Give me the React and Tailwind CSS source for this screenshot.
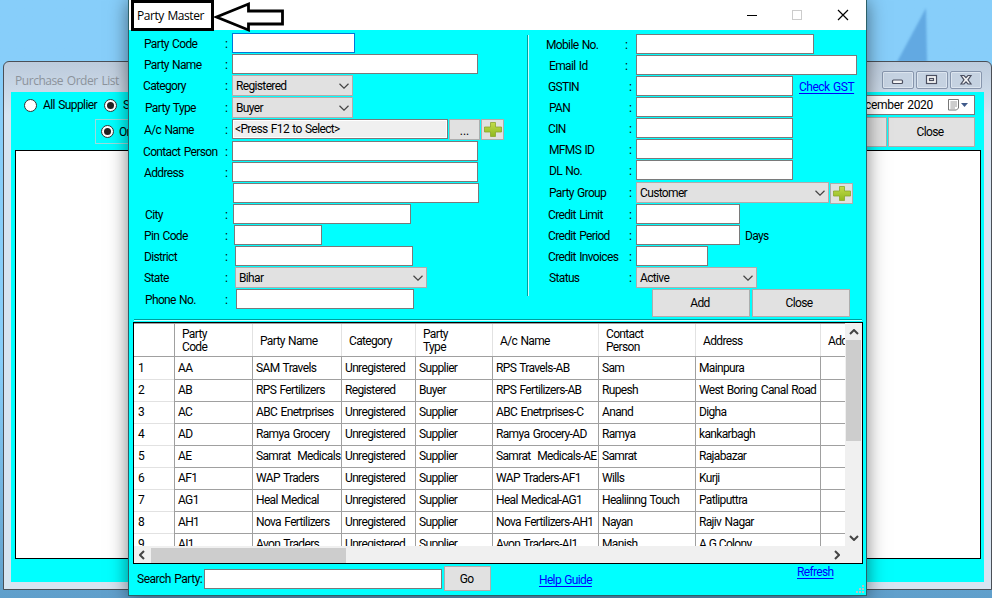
import clsx from 'clsx';

const leftFields = [
  { label: 'Party Code', row: 'h-[21px]', pad: 'pl-[15px]', field: 'ml-0 w-[123px] border-[#0078d7]' },
  { label: 'Party Name', row: 'h-[21px]', pad: 'pl-[15px]', field: 'ml-0 w-[246px]' },
  { label: 'Category', row: 'h-[22px]', pad: 'pl-[14px]', field: 'ml-0 w-[121px]', value: 'Registered', type: 'select' },
  { label: 'Party Type', row: 'h-[22px]', pad: 'pl-[16px]', field: 'ml-0 w-[121px]', value: 'Buyer', type: 'select' },
  { label: 'A/c Name', row: 'h-[22px]', pad: 'pl-[15px]', field: 'ml-0 w-[216px]', value: '<Press F12 to Select>', type: 'lookup' },
  { label: 'Contact Person', row: 'h-[21px]', pad: 'pl-[14px]', field: 'ml-0 w-[246px]' },
  { label: 'Address', row: 'h-[21px]', pad: 'pl-[15px]', field: 'ml-0 w-[246px]' },
  { label: '', row: 'h-[21px]', pad: 'pl-[15px]', field: 'ml-px w-[246px]' },
  { label: 'City', row: 'h-[21px]', pad: 'pl-[16px]', field: 'ml-px w-[178px]' },
  { label: 'Pin Code', row: 'h-[21px]', pad: 'pl-[15px]', field: 'ml-[2px] w-[88px]' },
  { label: 'District', row: 'h-[21px]', pad: 'pl-[15px]', field: 'ml-[3px] w-[178px]' },
  { label: 'State', row: 'h-[22px]', pad: 'pl-[15px]', field: 'ml-[3px] w-[192px]', value: 'Bihar', type: 'select' },
  { label: 'Phone No.', row: 'h-[21px]', pad: 'pl-[16px]', field: 'ml-[4px] w-[178px]' },
];

const rightFields = [
  { label: 'Mobile No.', row: 'h-[21px]', pad: 'pl-[17px]', colon: 'w-[11px]', field: 'w-[178px]' },
  { label: 'Email Id', row: 'h-[21px]', pad: 'pl-[20px]', colon: 'w-[11px]', field: 'w-[221px]' },
  { label: 'GSTIN', row: 'h-[21px]', pad: 'pl-[19px]', field: 'w-[157px]', type: 'gst' },
  { label: 'PAN', row: 'h-[21px]', pad: 'pl-[20px]', field: 'w-[157px]' },
  { label: 'CIN', row: 'h-[21px]', pad: 'pl-[19px]', field: 'w-[157px]' },
  { label: 'MFMS ID', row: 'h-[21px]', pad: 'pl-[20px]', field: 'w-[157px]' },
  { label: 'DL No.', row: 'h-[22px]', pad: 'pl-[20px]', field: 'w-[157px]' },
  { label: 'Party Group', row: 'h-[22px]', pad: 'pl-[20px]', field: 'w-[193px]', value: 'Customer', type: 'group' },
  { label: 'Credit Limit', row: 'h-[21px]', pad: 'pl-[19px]', field: 'w-[104px]' },
  { label: 'Credit Period', row: 'h-[21px]', pad: 'pl-[19px]', field: 'w-[104px]', after: 'Days' },
  { label: 'Credit Invoices', row: 'h-[21px]', pad: 'pl-[19px]', field: 'w-[72px]' },
  { label: 'Status', row: 'h-[22px]', pad: 'pl-[20px]', field: 'w-[121px]', value: 'Active', type: 'select' },
];

const columns = ['', 'Party\nCode', 'Party Name', 'Category', 'Party\nType', 'A/c Name', 'Contact\nPerson', 'Address', 'Add'];

const rows = [
  ['1', 'AA', 'SAM Travels', 'Unregistered', 'Supplier', 'RPS Travels-AB', 'Sam', 'Mainpura', ''],
  ['2', 'AB', 'RPS Fertilizers', 'Registered', 'Buyer', 'RPS Fertilizers-AB', 'Rupesh', 'West Boring Canal Road', ''],
  ['3', 'AC', 'ABC Enetrprises', 'Unregistered', 'Supplier', 'ABC Enetrprises-C', 'Anand', 'Digha', ''],
  ['4', 'AD', 'Ramya Grocery', 'Unregistered', 'Supplier', 'Ramya Grocery-AD', 'Ramya', 'kankarbagh', ''],
  ['5', 'AE', 'Samrat  Medicals', 'Unregistered', 'Supplier', 'Samrat  Medicals-AE', 'Samrat', 'Rajabazar', ''],
  ['6', 'AF1', 'WAP Traders', 'Unregistered', 'Supplier', 'WAP Traders-AF1', 'Wills', 'Kurji', ''],
  ['7', 'AG1', 'Heal Medical', 'Unregistered', 'Supplier', 'Heal Medical-AG1', 'Healiinng Touch', 'Patliputtra', ''],
  ['8', 'AH1', 'Nova Fertilizers', 'Unregistered', 'Supplier', 'Nova Fertilizers-AH1', 'Nayan', 'Rajiv Nagar', ''],
  ['9', 'AI1', 'Avon Traders', 'Unregistered', 'Supplier', 'Avon Traders-AI1', 'Manish', 'A.G.Colony', ''],
];

const gridCols = 'grid grid-cols-[41px_78px_89px_74px_77px_106px_97px_125px_60px]';

function Chevron({ className, d = 'M0.5 0.8 L5 5.2 L9.5 0.8', width = 1.2 }) {
  return (
    <svg viewBox="0 0 10 6" className={clsx('w-[10px] h-[6px] shrink-0', className)} fill="none" stroke="#444" strokeWidth={width}>
      <path d={d} />
    </svg>
  );
}

function PlusButton({ className }) {
  return (
    <button className={clsx('w-[23px] h-[21px] bg-[#e1e1e1] border border-[#adadad] flex items-center justify-center shrink-0', className)}>
      <svg width="18" height="17" viewBox="0 0 18 17">
        <defs>
          <linearGradient id="plus" x1="0" y1="0" x2="0" y2="1">
            <stop offset="0" stopColor="#c3dc4a" />
            <stop offset="1" stopColor="#8fb81f" />
          </linearGradient>
        </defs>
        <path d="M6.500 1.500h5v4.500h6v5h-6v4.500h-5V11h-6V6h6z" fill="url(#plus)" stroke="#8aa62c" strokeWidth="0.8" />
      </svg>
    </button>
  );
}

function Field({ type, value, className }) {
  if (type === 'select' || type === 'group') {
    return (
      <div className={clsx('h-[21px] bg-[#e1e1e1] border border-[#adadad] pl-[3px] pr-[3px] flex items-center justify-between shrink-0', className)}>
        <span className="pt-px">{value}</span>
        <Chevron />
      </div>
    );
  }
  return (
    <div className={clsx('h-[20px] border shrink-0 pl-[2px] leading-[18px]', type === 'lookup' ? 'bg-[#f0f0f0] shadow-[inset_0_0_0_1px_#fff]' : 'bg-white', !className.includes('border-[') && 'border-[#7a7a7a]', className)}>
      {value}
    </div>
  );
}

function FormRow({ item, labelWidth, colonWidth }) {
  return (
    <div className={clsx('flex items-start', item.row)}>
      <span className={clsx('leading-[22px] shrink-0 flex justify-between whitespace-nowrap', labelWidth, item.pad)}>
        <span>{item.label}</span>
        {item.label && <span className={clsx('shrink-0', item.colon || colonWidth)}>:</span>}
      </span>
      <Field type={item.type} value={item.value} className={item.field} />
      {item.type === 'lookup' && (
        <>
          <button className="ml-px w-[31px] h-[21px] bg-[#e1e1e1] border border-[#adadad] leading-[22px] tracking-normal">...</button>
          <PlusButton className="ml-px" />
        </>
      )}
      {item.type === 'gst' && <a className="ml-[6px] leading-[22px] text-[#0000ff] underline underline-offset-2 tracking-[-0.5px]">Check GST</a>}
      {item.type === 'group' && <PlusButton className="ml-px mt-px" />}
      {item.after && <span className="ml-[5px] leading-[22px]">{item.after}</span>}
    </div>
  );
}

function Radio({ checked }) {
  return (
    <span className="w-[13px] h-[13px] rounded-full border border-[#333] bg-white flex items-center justify-center shrink-0">
      {checked && <span className="w-[7px] h-[7px] rounded-full bg-[#222]" />}
    </span>
  );
}

function DataGrid() {
  return (
    <div className="ml-[4px] mt-px w-[730px] h-[242px] border border-black bg-[#f0f0f0] flex flex-col">
      <div className="flex h-[224px]">
        <div className="w-[711px] h-[223px] overflow-hidden bg-white shrink-0">
          <div className={clsx(gridCols, 'h-[34px] w-[747px] border-y border-[#a0a0a0]')}>
            {columns.map((name, i) => (
              <div key={i} className={clsx('border-r flex items-center pl-[7px] pt-[2px] leading-[13px] whitespace-pre', i === 0 ? 'border-[#a0a0a0]' : 'border-[#e2e2e2]')}>
                {name}
              </div>
            ))}
          </div>
          {rows.map((row) => (
            <div key={row[0]} className={clsx(gridCols, 'h-[22px] w-[747px]')}>
              {row.map((cell, i) => (
                <div key={i} className={clsx('border-r border-r-[#a0a0a0] border-b leading-[22px] whitespace-pre', i === 0 ? 'pl-[4px] border-b-[#e2e2e2]' : 'pl-[3px] border-b-[#a0a0a0]')}>
                  {cell}
                </div>
              ))}
            </div>
          ))}
        </div>
        <div className="w-[17px] flex flex-col items-center">
          <div className="h-[17px] flex items-center"><Chevron d="M1 5 L5 1 L9 5" width={2} /></div>
          <div className="w-[15px] h-[101px] bg-[#cdcdcd]" />
          <div className="flex-1" />
          <div className="h-[19px] flex items-center"><Chevron d="M1 1 L5 5 L9 1" width={2} /></div>
        </div>
      </div>
      <div className="flex h-[16px] items-center">
        <div className="w-[17px] flex justify-center"><Chevron className="rotate-90 -ml-px" width={2} d="M1 1 L5 5 L9 1" /></div>
        <div className="w-[195px] h-[15px] bg-[#cdcdcd]" />
        <div className="flex-1" />
        <div className="w-[17px] mr-[17px] flex justify-center"><Chevron className="-rotate-90" width={2} d="M1 1 L5 5 L9 1" /></div>
      </div>
    </div>
  );
}

function FrameButton({ children }) {
  return (
    <button className="w-[32px] h-[18px] border border-[#8796ad] rounded-[2px] bg-[#c5d2e1] shadow-[inset_0_0_0_1px_#dce5ef] flex items-center justify-center">
      <svg width="14" height="12" viewBox="0 0 14 12" fill="#f5f5f5" stroke="#4b4f60" strokeWidth="1.200">{children}</svg>
    </button>
  );
}

function OrderListWindow() {
  return (
    <div className="absolute left-[3px] top-[61px] w-[989px] h-[529px] border border-[#4a4f57] rounded-t-[6px] bg-linear-to-b from-[#bccbdc] via-[#d7e4f1] via-10% to-[#d7e4f1] px-[7px] flex flex-col">
      <div className="h-[30px] shrink-0 flex justify-between pr-[2px]">
        <span className="pl-[4px] pt-[10px] leading-[18px] text-[12px] tracking-[-0.45px] text-[#8c939b] font-['Open_Sans',sans-serif]">Purchase Order List</span>
        <div className="flex gap-[2px] pt-[9px]">
          <FrameButton><rect x="1.500" y="6" width="10" height="3.500" rx="1" /></FrameButton>
          <FrameButton>
            <rect x="1.500" y="1.500" width="10" height="8" />
            <rect x="4.500" y="4.500" width="4" height="2" />
          </FrameButton>
          <FrameButton><path d="M2 1.500h3L7 3.700l2-2.200h3L9 5.800l3 4.200h-3L7 7.800 5 10h-3L5 5.800z" /></FrameButton>
        </div>
      </div>
      <div className="h-[490px] w-[973px] bg-[#00ffff] flex flex-col">
        <div className="h-[58px] flex justify-between">
          <div className="w-[200px]">
            <div className="flex items-center pl-[13px] pt-[6px] whitespace-nowrap">
              <Radio />
              <span className="w-[67px] pl-[6px] leading-[14px] tracking-[-0.6px]">All Supplier</span>
              <Radio checked />
              <span className="pl-[6px] leading-[14px]">Selected</span>
            </div>
            <div className="ml-[84px] mt-[7px] h-[25px] border border-[#9adcdc] flex items-center pl-[5px]">
              <Radio checked />
              <span className="pl-[5px]">Only</span>
            </div>
          </div>
          <div className="w-[190px] pr-[9px] pt-[3px]">
            <div className="h-[20px] border border-[#7a7a7a] bg-white flex items-center justify-end gap-[14px] pr-[5px]">
              <span className="tracking-[-0.3px]">December 2020</span>
              <svg width="22" height="14" viewBox="0 0 22 14">
                <path d="M1.500 1.500h10v8.500l-2 2h-8z" fill="#fff" stroke="#777" />
                <path d="M3 4h7M3 6h7M3 8h7M3 10h5M5 3v8M7 3v8M9 3v6" stroke="#aaa" strokeWidth="0.7" />
                <path d="M14 5h7l-3.500 4z" fill="#3f5a8a" />
              </svg>
            </div>
            <div className="flex mt-[2px] gap-px">
              <div className="w-[93px] h-[30px] bg-[#e1e1e1] border border-[#adadad]" />
              <button className="w-[87px] h-[30px] bg-[#e1e1e1] border border-[#adadad] pr-[3px]">Close</button>
            </div>
          </div>
        </div>
        <div className="ml-[4px] w-[966px] h-[409px] border border-black bg-white" />
      </div>
    </div>
  );
}

function PartyMasterWindow() {
  return (
    <div className="absolute left-[128px] -top-px w-[739px] h-[597px] border border-[#2c6068] bg-[#00ffff] shadow-[0_2px_18px_rgba(0,0,0,0.5)]">
      <header className="h-[30px] bg-white flex items-center justify-between">
        <div className="flex items-center">
          <div className="ml-[2px] mt-px w-[83px] h-[31px] border-[3px] border-black pl-[3px] leading-[25px] text-[12px] tracking-[-0.45px] font-['Open_Sans',sans-serif] whitespace-nowrap">Party Master</div>
          <svg width="74" height="30" viewBox="0 0 74 30" fill="#fff" stroke="#000" strokeWidth="2.800" className="shrink-0 overflow-visible">
            <path d="M2.500 17 L34.500 4 V11 H68.500 V24 H34.500 V30 Z" />
          </svg>
        </div>
        <svg width="103" height="16" viewBox="0 0 103 16" fill="none" stroke="#000" className="mr-[17px]">
          <path d="M1 8.500h10" />
          <rect x="46.500" y="3.500" width="9" height="9" stroke="#ccc" />
          <path d="M92 3l10 10M102 3l-10 10" strokeWidth="1.200" />
        </svg>
      </header>

      <div className="flex h-[289px]">
        <div className="w-[398px] pt-[3px] shrink-0">
          {leftFields.map((item, i) => <FormRow key={i} item={item} labelWidth="w-[103px]" colonWidth="w-[7px]" />)}
        </div>
        <div className="w-[2px] h-[261px] mt-[5px] bg-[#c8ffff] border-l border-[#009c9c] shrink-0" />
        <div className="w-[337px] pt-[4px]">
          {rightFields.map((item) => <FormRow key={item.label} item={item} labelWidth="w-[107px]" colonWidth="w-[7px]" />)}
          <div className="flex gap-[2px] pl-[123px]">
            <button className="w-[98px] h-[28px] bg-[#e1e1e1] border border-[#adadad] pr-[2px]">Add</button>
            <button className="w-[98px] h-[28px] bg-[#e1e1e1] border border-[#adadad] pr-[4px]">Close</button>
          </div>
        </div>
      </div>
      <div className="ml-[5px] w-[728px] h-[2px] border-t border-[#009c9c] border-b border-b-[#c8ffff]" />
      <DataGrid />

      <footer className="flex items-start pl-[8px] h-[32px]">
        <span className="w-[67px] leading-[31px] whitespace-nowrap tracking-[-0.5px]">Search Party:</span>
        <div className="mt-[5px] w-[238px] h-[20px] bg-white border border-[#7a7a7a]" />
        <button className="ml-[2px] mt-[2px] w-[47px] h-[25px] bg-[#e1e1e1] border border-[#adadad] pr-[2px]">Go</button>
        <a className="ml-[48px] leading-[33px] text-[#0000ff] underline underline-offset-2 w-[258px]">Help Guide</a>
        <a className="leading-[17px] text-[#0000ff] underline underline-offset-2 w-[59px]">Refresh</a>
        <svg width="9" height="9" viewBox="0 0 9 9" fill="#bfbfbf" className="mt-[21px]">
          <path d="M6 0h2v2h-2zM3 3h2v2h-2zM6 3h2v2h-2zM0 6h2v2h-2zM3 6h2v2h-2zM6 6h2v2h-2z" />
        </svg>
      </footer>
    </div>
  );
}

export default function App() {
  return (
    <div className="relative w-[992px] h-[598px] overflow-hidden bg-linear-to-b from-[#87cefa] from-60% to-[#609fcb] text-[12px] tracking-[-0.65px] [word-spacing:1px] text-black font-[Roboto,'Liberation_Sans',sans-serif]">
      <svg width="80" height="60" viewBox="0 0 80 60" className="absolute left-[890px] top-[2px] blur-[1px]">
        <path d="M36 6 L37 60 H7 Z" fill="#62a9e2" />
      </svg>
      <OrderListWindow />
      <PartyMasterWindow />
    </div>
  );
}
